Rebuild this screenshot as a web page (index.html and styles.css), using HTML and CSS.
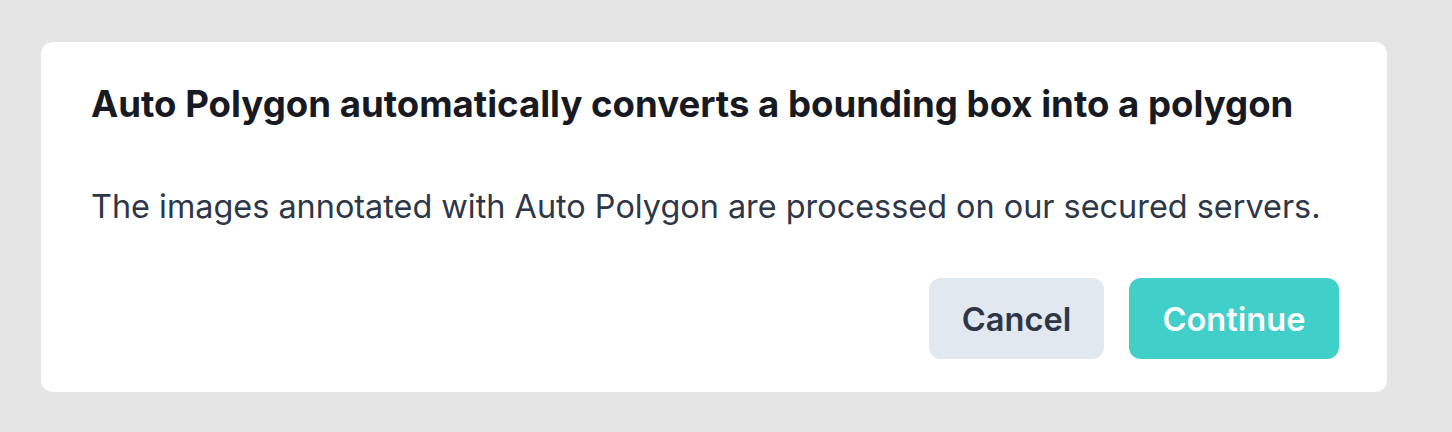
FILE: index.html
```html
<!DOCTYPE html>
<html>
<head>
<meta charset="utf-8">
<link rel="stylesheet" href="styles.css">
</head>
<body>
<div class="dialog">
  <h2 class="title">Auto Polygon automatically converts a bounding box into a polygon</h2>
  <p class="text">The images annotated with Auto Polygon are processed on our secured servers.</p>
  <div class="actions">
    <button class="btn cancel">Cancel</button>
    <button class="btn continue">Continue</button>
  </div>
</div>
</body>
</html>
```
FILE: styles.css
```css
html, body {
  margin: 0;
  background: #e5e5e5;
  font-family: Inter, "Noto Sans", sans-serif;
}
body {
  padding: 42px 0 0 41px;
  height: 432px;
  box-sizing: border-box;
}
.dialog {
  width: 1346px;
  height: 350px;
  box-sizing: border-box;
  background: #ffffff;
  border-radius: 12px;
  padding: 0 48px 33px 50px;
  display: flex;
  flex-direction: column;
}
.title {
  margin: 0;
  padding-top: 40px;
  font-size: 36.6px;
  line-height: 44px;
  font-weight: 700;
  color: #171923;
  white-space: nowrap;
}
.text {
  margin: 0;
  padding-top: 59px;
  font-size: 32.4px;
  line-height: 44px;
  font-weight: 400;
  color: #2d3748;
  white-space: nowrap;
}
.actions {
  margin-top: auto;
  display: flex;
  justify-content: flex-end;
  gap: 25px;
}
.btn {
  height: 81px;
  border: none;
  border-radius: 12px;
  font-family: Inter, "Noto Sans", sans-serif;
  font-size: 32.6px;
  font-weight: 600;
  padding: 0;
}
.cancel {
  width: 175px;
  background: #e2e8f0;
  color: #2d3748;
}
.continue {
  width: 210px;
  background: #40cfc9;
  color: #ffffff;
}
```
